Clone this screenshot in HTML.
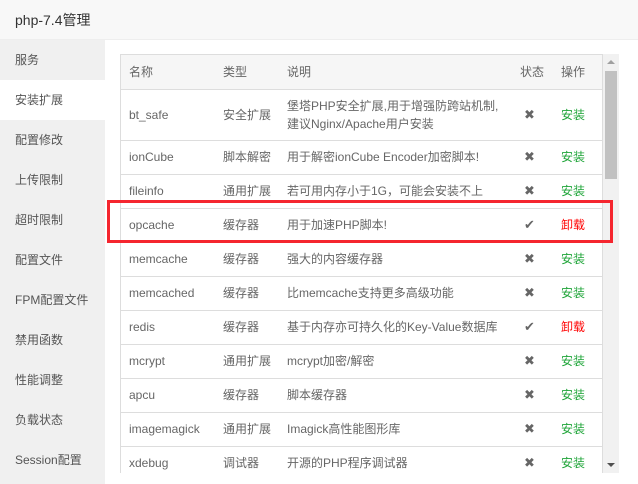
<!DOCTYPE html>
<html><head><meta charset="utf-8"><style>
*{margin:0;padding:0;box-sizing:border-box}
body{width:638px;height:484px;overflow:hidden;background:#fff;font-family:"Liberation Sans","Noto Sans CJK SC",sans-serif;font-size:12px;color:#666;position:relative}
.title{position:absolute;left:0;top:0;width:638px;height:40px;background:#f8f8f8;border-bottom:1px solid #eee;font-size:14px;color:#333;line-height:40px;padding-left:15px}
.side{position:absolute;left:0;top:40px;width:105px;height:444px;background:#f0f0f0}
.side div{height:40px;line-height:40px;padding-left:15px;color:#555;font-size:12px}
.side .on{background:#fff}
.wrap{position:absolute;left:120px;top:54px;width:483px;height:419px;overflow:hidden;border:1px solid #ddd;border-bottom:none}
table{border-collapse:collapse;width:482px;table-layout:fixed}
td,th{border-bottom:1px solid #ddd;text-align:left;font-weight:normal;padding:0 0 0 8px;height:34px;line-height:18px;vertical-align:middle}
th{background:#f6f6f6;height:34px}
td:nth-child(3){padding-right:12px}
td:nth-child(4){padding-left:12px}
.g{color:#20a53a}.r{color:#f00}
.st{font-size:13px;color:#666}
.sb{position:absolute;left:603px;top:54px;width:16px;height:419px;background:#f1f1f1}
.thumb{position:absolute;left:2px;top:17px;width:12px;height:108px;background:#c1c1c1}
.box{position:absolute;left:107px;top:200px;width:506px;height:43px;border:3px solid #f5262f}
</style></head><body>
<div class="title">php-7.4管理</div>
<div class="side"><div>服务</div><div class="on">安装扩展</div><div>配置修改</div><div>上传限制</div><div>超时限制</div><div>配置文件</div><div>FPM配置文件</div><div>禁用函数</div><div>性能调整</div><div>负载状态</div><div>Session配置</div></div>
<div class="wrap"><table>
<colgroup><col style="width:94px"><col style="width:64px"><col style="width:233px"><col style="width:41px"><col style="width:50px"></colgroup>
<tr><th>名称</th><th>类型</th><th>说明</th><th>状态</th><th>操作</th></tr>
<tr><td style="height:51px">bt_safe</td><td>安全扩展</td><td>堡塔PHP安全扩展,用于增强防跨站机制,<br>建议Nginx/Apache用户安装</td><td class="st">✖</td><td class="g">安装</td></tr>
<tr><td>ionCube</td><td>脚本解密</td><td>用于解密ionCube Encoder加密脚本!</td><td class="st">✖</td><td class="g">安装</td></tr>
<tr><td>fileinfo</td><td>通用扩展</td><td>若可用内存小于1G，可能会安装不上</td><td class="st">✖</td><td class="g">安装</td></tr>
<tr><td>opcache</td><td>缓存器</td><td>用于加速PHP脚本!</td><td class="st">✔</td><td class="r">卸载</td></tr>
<tr><td>memcache</td><td>缓存器</td><td>强大的内容缓存器</td><td class="st">✖</td><td class="g">安装</td></tr>
<tr><td>memcached</td><td>缓存器</td><td>比memcache支持更多高级功能</td><td class="st">✖</td><td class="g">安装</td></tr>
<tr><td>redis</td><td>缓存器</td><td>基于内存亦可持久化的Key-Value数据库</td><td class="st">✔</td><td class="r">卸载</td></tr>
<tr><td>mcrypt</td><td>通用扩展</td><td>mcrypt加密/解密</td><td class="st">✖</td><td class="g">安装</td></tr>
<tr><td>apcu</td><td>缓存器</td><td>脚本缓存器</td><td class="st">✖</td><td class="g">安装</td></tr>
<tr><td>imagemagick</td><td>通用扩展</td><td>Imagick高性能图形库</td><td class="st">✖</td><td class="g">安装</td></tr>
<tr><td>xdebug</td><td>调试器</td><td>开源的PHP程序调试器</td><td class="st">✖</td><td class="g">安装</td></tr>
</table></div>
<div class="sb"><div style="position:absolute;left:4px;top:6px;border:4px solid transparent;border-bottom:4px solid #a0a0a0;border-top:none;width:0"></div><div class="thumb"></div><div style="position:absolute;left:4px;bottom:6px;border:4px solid transparent;border-top:4px solid #505050;border-bottom:none;width:0"></div></div>
<div class="box"></div>
</body></html>
